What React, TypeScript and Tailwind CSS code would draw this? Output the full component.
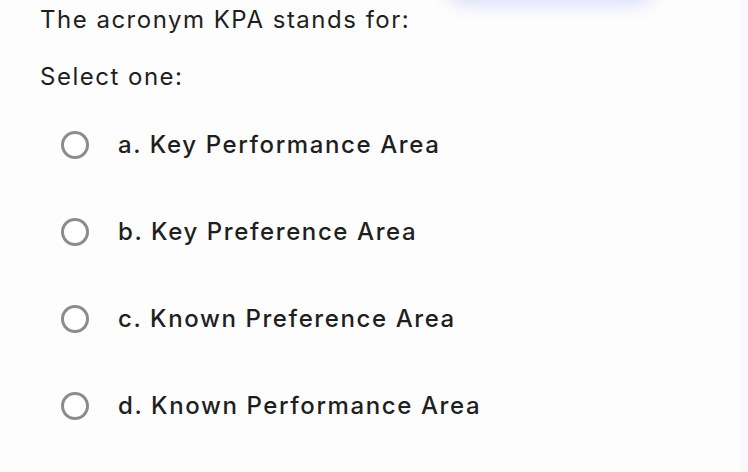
const OPTIONS = [
  'a. Key Performance Area',
  'b. Key Preference Area',
  'c. Known Preference Area',
  'd. Known Performance Area',
]

function Radio() {
  return <span className="block h-[28px] w-[28px] shrink-0 rounded-full border-[3px] border-[#8c8c8c] bg-white" />
}

export default function App() {
  return (
    <div className="relative flex h-[472px] w-[748px] overflow-hidden bg-[#fdfdfd] font-['Inter',sans-serif] text-[#1f1f1f]">
      {/* shadow of the floating bar that sits above this view */}
      <div className="absolute left-[448px] top-[-40px] h-[40px] w-[206px] rounded-b-2xl bg-white shadow-[0_4px_18px_rgba(90,100,240,0.22)]" />

      <div className="flex-1 px-10 pt-[4px]">
        <p className="text-[24px] leading-[32px] tracking-[1.5px]">The acronym KPA stands for:</p>
        <p className="mt-[25px] text-[24px] leading-[32px] tracking-[1.5px]">Select one:</p>

        <ul className="mt-[36px] flex flex-col gap-[55px]">
          {OPTIONS.map((o) => (
            <li key={o} className="flex h-[32px] items-center">
              <span className="ml-[21px] mr-[29px]">
                <Radio />
              </span>
              <span className="text-[24px] font-medium leading-[32px] tracking-[1.6px]">{o}</span>
            </li>
          ))}
        </ul>
      </div>

      <div className="w-[8px] bg-[#faf8fa]" />
    </div>
  )
}
